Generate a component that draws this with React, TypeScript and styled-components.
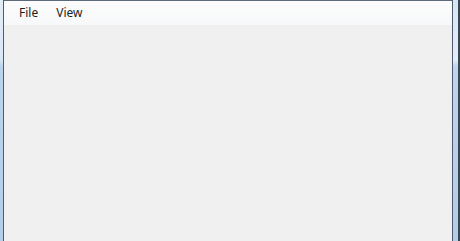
import React from 'react';
import styled, { createGlobalStyle } from 'styled-components';

const GlobalStyle = createGlobalStyle`
    html, body {
        margin: 0;
        padding: 0;
        background: #f0f0f0;
        overflow: hidden;
    }
`;

const App = () => {
    return (
        <>
            <GlobalStyle />
            <Frame>
                <LeftEdge />
                <ClientArea>
                    <MenuBar>
                        <MenuItem>File</MenuItem>
                        <MenuItem>View</MenuItem>
                    </MenuBar>
                    <Content />
                </ClientArea>
                <RightEdge />
                <OuterEdge />
            </Frame>
        </>
    );
};

const Frame = styled.div`
    width: 460px;
    height: 241px;
    display: flex;
`;

const LeftEdge = styled.div`
    width: 3px;
    background: linear-gradient(
        to bottom,
        #e3edf8 0px,
        #d9e7f5 60px,
        #bcd3ec 66px,
        #b4cde9 100%
    );
`;

const RightEdge = styled.div`
    width: 5px;
    background: linear-gradient(
        to bottom,
        #d6e5f6 0px,
        #e4eef9 60px,
        #bdd5ee 66px,
        #b3cce9 100%
    );
`;

const OuterEdge = styled.div`
    width: 2px;
    background: #3c4653;
`;

const ClientArea = styled.div`
    flex: 1;
    display: flex;
    flex-direction: column;
    border-top: 1px solid #5c6b7c;
    border-left: 1px solid #4f5c6b;
    border-right: 1px solid #4f5c6b;
    background: #f0f0f0;
`;

const MenuBar = styled.div`
    height: 24px;
    display: flex;
    align-items: center;
    padding-left: 8px;
    background: linear-gradient(to bottom, #fcfcfc, #f7f8f9);
`;

const MenuItem = styled.span`
    font-family: 'Noto Sans', 'Open Sans', sans-serif;
    font-size: 12px;
    color: #1e1e1e;
    padding: 0 7px;
    margin-right: 4px;
    line-height: 24px;
`;

const Content = styled.div`
    flex: 1;
    background: #f0f0f0;
`;

export default App;
